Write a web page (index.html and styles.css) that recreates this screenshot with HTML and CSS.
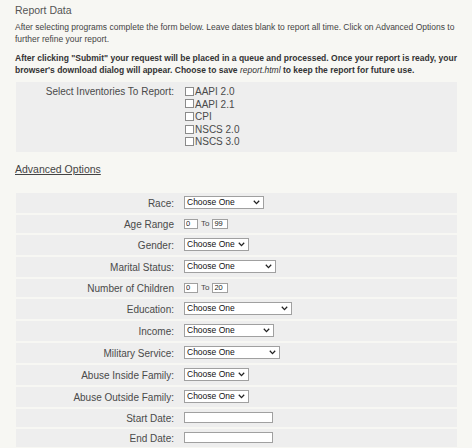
FILE: index.html
```html
<!DOCTYPE html>
<html lang="en">
<head>
    <meta charset="UTF-8">
    <title>Report Data</title>
    <link rel="stylesheet" href="styles.css">
</head>
<body>
    <div class="page">
        <h1 class="title">Report Data</h1>
        <p class="intro">After selecting programs complete the form below. Leave dates blank to report all time. Click on Advanced Options to further refine your report.</p>
        <p class="note">After clicking "Submit" your request will be placed in a queue and processed. Once your report is ready, your<br>browser's download dialog will appear. Choose to save <i>report.html</i> to keep the report for future use.</p>

        <div class="panel inventories">
            <div class="label">Select Inventories To Report:</div>
            <div class="checks">
                <label class="check"><input type="checkbox">AAPI 2.0</label>
                <label class="check"><input type="checkbox">AAPI 2.1</label>
                <label class="check"><input type="checkbox">CPI</label>
                <label class="check"><input type="checkbox">NSCS 2.0</label>
                <label class="check"><input type="checkbox">NSCS 3.0</label>
            </div>
        </div>

        <a class="adv-link" href="#">Advanced Options</a>

        <div class="options">
            <div class="row">
                <div class="label">Race:</div>
                <span class="select w-race"><select><option>Choose One</option></select><svg class="caret" viewBox="0 0 7 5"><polyline points="0.8,0.8 3.5,3.6 6.2,0.8"/></svg></span>
            </div>
            <div class="row short">
                <div class="label">Age Range</div>
                <span class="range"><input class="tiny w-1" type="text" value="0"><span class="to">To</span><input class="tiny w-2" type="text" value="99"></span>
            </div>
            <div class="row">
                <div class="label">Gender:</div>
                <span class="select w-small"><select><option>Choose One</option></select><svg class="caret" viewBox="0 0 7 5"><polyline points="0.8,0.8 3.5,3.6 6.2,0.8"/></svg></span>
            </div>
            <div class="row">
                <div class="label">Marital Status:</div>
                <span class="select w-marital"><select><option>Choose One</option></select><svg class="caret" viewBox="0 0 7 5"><polyline points="0.8,0.8 3.5,3.6 6.2,0.8"/></svg></span>
            </div>
            <div class="row short">
                <div class="label">Number of Children</div>
                <span class="range"><input class="tiny w-1" type="text" value="0"><span class="to">To</span><input class="tiny w-2" type="text" value="20"></span>
            </div>
            <div class="row">
                <div class="label">Education:</div>
                <span class="select w-education"><select><option>Choose One</option></select><svg class="caret" viewBox="0 0 7 5"><polyline points="0.8,0.8 3.5,3.6 6.2,0.8"/></svg></span>
            </div>
            <div class="row">
                <div class="label">Income:</div>
                <span class="select w-income"><select><option>Choose One</option></select><svg class="caret" viewBox="0 0 7 5"><polyline points="0.8,0.8 3.5,3.6 6.2,0.8"/></svg></span>
            </div>
            <div class="row">
                <div class="label">Military Service:</div>
                <span class="select w-military"><select><option>Choose One</option></select><svg class="caret" viewBox="0 0 7 5"><polyline points="0.8,0.8 3.5,3.6 6.2,0.8"/></svg></span>
            </div>
            <div class="row">
                <div class="label">Abuse Inside Family:</div>
                <span class="select w-small"><select><option>Choose One</option></select><svg class="caret" viewBox="0 0 7 5"><polyline points="0.8,0.8 3.5,3.6 6.2,0.8"/></svg></span>
            </div>
            <div class="row">
                <div class="label">Abuse Outside Family:</div>
                <span class="select w-small"><select><option>Choose One</option></select><svg class="caret" viewBox="0 0 7 5"><polyline points="0.8,0.8 3.5,3.6 6.2,0.8"/></svg></span>
            </div>
            <div class="row short">
                <div class="label">Start Date:</div>
                <input class="date" type="text">
            </div>
            <div class="row short">
                <div class="label">End Date:</div>
                <input class="date" type="text">
            </div>
        </div>
    </div>
</body>
</html>
```

FILE: styles.css
```css
body {
    margin: 0;
    background-color: #f7f7f3;
    font-family: "Liberation Sans", Arial, sans-serif;
    color: #444444;
}

.page {
    padding: 0 15px;
}

.title {
    font-size: 10.5px;
    font-weight: normal;
    line-height: 12px;
    color: #555555;
    margin: 4px 0 0;
}

.intro, .note {
    font-size: 8.5px;
    line-height: 12px;
    margin: 5px 0 0;
}

.note {
    font-weight: bold;
    color: #333333;
    margin-top: 7px;
}

.note i {
    font-weight: normal;
}

.panel {
    background-color: #eeeeee;
    margin: 6px 0 0 1px;
}

.inventories {
    display: flex;
    padding: 4px 0 3px;
}

.label {
    width: 158px;
    text-align: right;
    font-size: 10px;
    color: #4a4a4a;
    margin-right: 10px;
    flex-shrink: 0;
}

.row .label {
    padding-top: 1px;
}

.inventories .label {
    line-height: 12.6px;
}

.checks {
    display: flex;
    flex-direction: column;
}

.check {
    display: flex;
    align-items: center;
    font-size: 10px;
    line-height: 12.6px;
    color: #4a4a4a;
}

.check input {
    appearance: none;
    width: 9px;
    height: 9px;
    margin: 0 1px 2px;
    border: 1px solid #8a8a8a;
    background-color: #ffffff;
}

.adv-link {
    display: block;
    font-size: 10.5px;
    line-height: 12px;
    color: #444444;
    text-decoration: underline;
    margin-top: 11px;
}

.options {
    display: flex;
    flex-direction: column;
    gap: 2px;
    margin: 18px 0 0 1px;
}

.row {
    display: flex;
    align-items: center;
    height: 20px;
    background-color: #eeeeee;
}

.row.short {
    height: 18px;
}

.select {
    position: relative;
    display: flex;
    height: 13px;
}

.select select {
    display: block;
    appearance: none;
    width: 100%;
    height: 13px;
    margin: 0;
    padding: 0 0 0 2px;
    border: 1px solid #a0a0a0;
    border-radius: 0;
    background-color: #ffffff;
    font-family: "Liberation Sans", Arial, sans-serif;
    font-size: 8.5px;
    line-height: 11px;
    color: #111111;
}

.caret {
    position: absolute;
    right: 4px;
    top: 4px;
    width: 7px;
    height: 5px;
    fill: none;
    stroke: #222222;
    stroke-width: 1.3;
}

.w-race { width: 80px; }
.w-small { width: 65px; }
.w-marital { width: 92px; }
.w-education { width: 108px; }
.w-income { width: 90px; }
.w-military { width: 96px; }

.range {
    display: flex;
    align-items: center;
}

.tiny {
    height: 10px;
    margin: 0;
    padding: 0 1px;
    border: 1px solid #a0a0a0;
    background-color: #ffffff;
    font-family: "Liberation Sans", Arial, sans-serif;
    font-size: 7.5px;
    color: #222222;
    box-sizing: border-box;
}

.w-1 { width: 14px; }
.w-2 { width: 16px; }

.to {
    font-size: 8px;
    margin: 0 3px;
    color: #444444;
}

.date {
    width: 89px;
    height: 11px;
    margin: 0;
    padding: 0;
    border: 1px solid #a0a0a0;
    background-color: #ffffff;
    box-sizing: border-box;
}
```
